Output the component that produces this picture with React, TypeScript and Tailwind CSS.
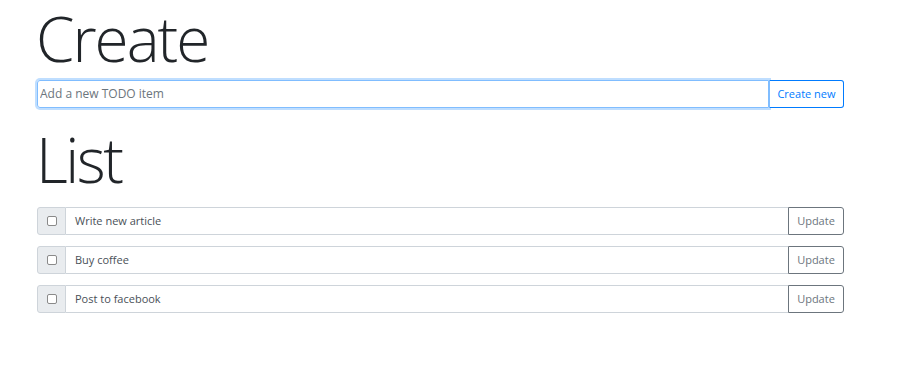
import React, { useState } from 'react';

const todos = ['Write new article', 'Buy coffee', 'Post to facebook'];

export default function App() {
  const [text, setText] = useState('');

  return (
    <div className="min-h-[370px] bg-white font-['Open_Sans',sans-serif] text-[#212529]">
      <div className="w-[807px] ml-[37px] pt-[1px]">
        {/* Create */}
        <h1 className="text-[62px] font-light leading-[1.2] tracking-[-2px] ml-[-1px]">Create</h1>
        <div className="flex h-[28px] mt-[5px]">
          <input
            value={text}
            onChange={e => setText(e.target.value)}
            placeholder="Add a new TODO item"
            className="flex-1 min-w-0 pl-[2px] pr-2 text-[12px] border border-[#80bdff] rounded-l-[3px] outline-none shadow-[0_0_0_2px_rgba(0,123,255,0.25)] placeholder:text-[#6c757d]"
          />
          <button className="w-[75px] text-[11px] text-[#007bff] border border-[#007bff] border-l-[#80bdff] rounded-r-[3px] bg-white">
            Create new
          </button>
        </div>

        {/* List */}
        <h1 className="text-[62px] font-light leading-[1.2] tracking-[-2.5px] mt-[14px] ml-[-1px]">List</h1>
        <div className="flex flex-col gap-[11px] mt-[10px]">
          {todos.map(t => (
            <div key={t} className="flex h-[28px]">
              <div className="w-[29px] flex items-center justify-center bg-[#e9ecef] border border-[#ced4da] rounded-l-[3px]">
                <span className="w-[10px] h-[10px] border border-[#8a8a8a] rounded-[2px] bg-white" />
              </div>
              <div className="flex-1 flex items-center px-[9px] text-[11px] text-[#495057] border-y border-[#ced4da]">
                {t}
              </div>
              <button className="w-[56px] text-[11px] text-[#6c757d] border border-[#6c757d] rounded-r-[3px] bg-white">
                Update
              </button>
            </div>
          ))}
        </div>
      </div>
    </div>
  );
}
